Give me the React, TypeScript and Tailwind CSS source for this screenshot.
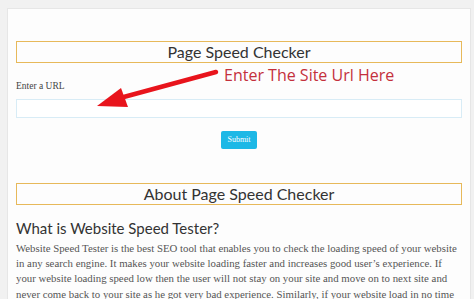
import React from "react";

export default function App() {
  return (
    <div className="w-[474px] h-[299px] overflow-hidden bg-[#f1f1f1] pt-[8px] pl-[7px] relative">
      <div className="w-[464px] h-[300px] bg-[#fdfdfd] border border-[#e6e6e6] px-[8px] pt-[32px]">
        <div className="h-[22px] border-[1.5px] border-[#e7b95a] flex items-center justify-center text-[16px] text-[#333] leading-none font-['Lato','Open_Sans',sans-serif]">
          Page Speed Checker
        </div>
        <div className="mt-[19px] text-[9.5px] text-[#444] leading-none font-['Liberation_Serif',serif]">
          Enter a URL
        </div>
        <div className="mt-[7px] h-[19px] border border-[#d8ecf6] bg-white" />
        <div className="flex justify-center mt-[13px]">
          <div className="w-[36px] h-[18px] bg-[#1db8e6] rounded-[2px] flex items-center justify-center text-white text-[8px] leading-none font-['Liberation_Serif',serif]">
            Submit
          </div>
        </div>
        <div className="mt-[34px] h-[22px] border-[1.5px] border-[#e7b95a] flex items-center justify-center text-[16px] text-[#333] leading-none font-['Lato','Open_Sans',sans-serif]">
          About Page Speed Checker
        </div>
        <div className="mt-[13px] text-[15px] text-[#333] leading-[20px] font-['Lato','Open_Sans',sans-serif]">
          What is Website Speed Tester?
        </div>
        <p className="mt-[3px] text-[10.8px] text-[#555] leading-[15.4px] whitespace-nowrap font-['Liberation_Serif',serif]">
          Website Speed Tester is the best SEO tool that enables you to check the loading speed of your website
          <br />
          in any search engine. It makes your website loading faster and increases good user’s experience. If
          <br />
          your website loading speed low then the user will not stay on your site and move on to next site and
          <br />
          never come back to your site as he got very bad experience. Similarly, if your website load in no time
        </p>
      </div>
      <div className="absolute left-[224px] top-[64px] text-[16px] text-[#c4303c] leading-[22px] font-['Open_Sans','Lato',sans-serif]">
        Enter The Site Url Here
      </div>
      <svg className="absolute left-0 top-0" width="474" height="299" viewBox="0 0 474 299">
        <line x1="216" y1="72" x2="120" y2="98" stroke="#e8141c" strokeWidth="4.5" strokeLinecap="round" />
        <polygon points="97,106 121,88 128,107" fill="#e8141c" />
      </svg>
    </div>
  );
}
